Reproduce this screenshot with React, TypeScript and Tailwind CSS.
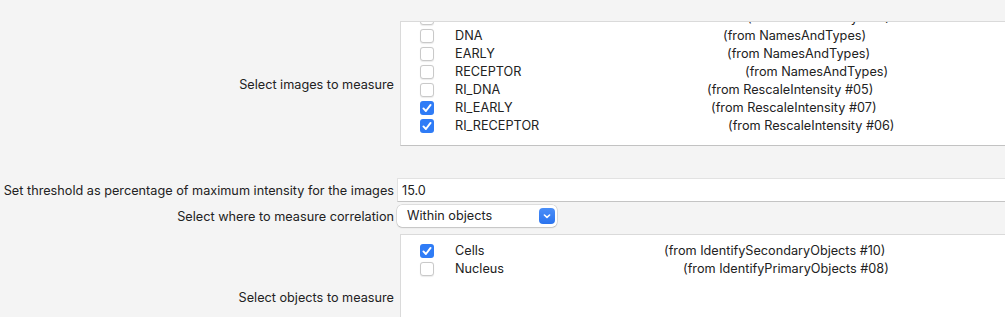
import React from 'react';

type Item = { name: string; from: string; checked: boolean; nameW: string };

const images: Item[] = [
  { name: 'ORIG', from: '(from ColorToGray #02)', checked: false, nameW: 'w-[292px]' },
  { name: 'DNA', from: '(from NamesAndTypes)', checked: false, nameW: 'w-[268px]' },
  { name: 'EARLY', from: '(from NamesAndTypes)', checked: false, nameW: 'w-[272px]' },
  { name: 'RECEPTOR', from: '(from NamesAndTypes)', checked: false, nameW: 'w-[290px]' },
  { name: 'RI_DNA', from: '(from RescaleIntensity #05)', checked: false, nameW: 'w-[252px]' },
  { name: 'RI_EARLY', from: '(from RescaleIntensity #07)', checked: true, nameW: 'w-[256px]' },
  { name: 'RI_RECEPTOR', from: '(from RescaleIntensity #06)', checked: true, nameW: 'w-[273px]' },
];

const objects: Item[] = [
  { name: 'Cells', from: '(from IdentifySecondaryObjects #10)', checked: true, nameW: 'w-[209px]' },
  { name: 'Nucleus', from: '(from IdentifyPrimaryObjects #08)', checked: false, nameW: 'w-[228px]' },
];

function Check({ on }: { on: boolean }) {
  if (on) {
    return (
      <span className="w-[14px] h-[14px] shrink-0 rounded-[3px] bg-[#2f7cf6] flex items-center justify-center">
        <svg viewBox="0 0 14 14" className="w-[14px] h-[14px]">
          <path d="M3.4 7.4 L5.9 10 L10.6 3.9" fill="none" stroke="#fff" strokeWidth="1.9" strokeLinecap="round" strokeLinejoin="round" />
        </svg>
      </span>
    );
  }
  return <span className="w-[14px] h-[14px] shrink-0 rounded-[3px] bg-white border border-[#c9c9c9] shadow-[0_0.5px_1px_rgba(0,0,0,0.08)]" />;
}

function Row({ item }: { item: Item }) {
  return (
    <div className="flex items-center h-[18px] pl-[19px] whitespace-nowrap">
      <Check on={item.checked} />
      <span className={`ml-[21px] pt-[1px] shrink-0 ${item.nameW}`}>{item.name}</span>
      <span className="pt-[1px]">{item.from}</span>
    </div>
  );
}

export default function App() {
  return (
    <div
      className="w-[1005px] h-[317px] overflow-hidden bg-[#f4f4f4] text-[12.7px] text-[#222] leading-none"
      style={{ fontFamily: 'Inter, "Liberation Sans", Arial, sans-serif' }}
    >
      <div className="pt-[21px] flex flex-col">
        {/* images */}
        <div className="flex items-center">
          <div className="w-[397px] shrink-0 text-right pr-[3px] pt-[3px]">Select images to measure</div>
          <div className="pl-[3px] shrink-0">
            <div className="w-[640px] h-[125px] bg-white border border-[#dadada] border-b-[#c2c2c2] overflow-hidden">
              <div className="-mt-[13px]">
                {images.map((it) => (
                  <Row key={it.name} item={it} />
                ))}
              </div>
            </div>
          </div>
        </div>

        {/* threshold */}
        <div className="flex items-center mt-[32px]">
          <div className="w-[397px] shrink-0 text-right pr-[3px] pt-[2px] whitespace-nowrap">
            Set threshold as percentage of maximum intensity for the images
          </div>
          <div className="w-[640px] shrink-0 h-[24px] bg-white border border-[#e2e2e2] border-b-[#c4c4c4] flex items-center pl-[4px] pt-[2px]">
            15.0
          </div>
        </div>

        {/* correlation */}
        <div className="flex items-center mt-[3px]">
          <div className="w-[397px] shrink-0 text-right pr-[3px] pt-[2px]">Select where to measure correlation</div>
          <div className="w-[160px] shrink-0 h-[22px] bg-white rounded-[5px] shadow-[0_0_0_0.5px_rgba(0,0,0,0.18),0_1px_1.5px_rgba(0,0,0,0.12)] flex items-center justify-between pl-[10px] pr-[2px]">
            <span className="pt-[1px]">Within objects</span>
            <span className="w-[16px] h-[16px] rounded-[4px] bg-gradient-to-b from-[#4a8ef8] to-[#2a73ee] flex items-center justify-center">
              <svg viewBox="0 0 16 16" className="w-[16px] h-[16px]">
                <path d="M5.4 7 L8 9.4 L10.6 7" fill="none" stroke="#fff" strokeWidth="1.6" strokeLinecap="round" strokeLinejoin="round" />
              </svg>
            </span>
          </div>
        </div>

        {/* objects */}
        <div className="flex items-center mt-[7px]">
          <div className="w-[397px] shrink-0 text-right pr-[3px] pt-[3px]">Select objects to measure</div>
          <div className="pl-[3px] shrink-0">
            <div className="w-[640px] h-[125px] bg-white border border-[#dadada] border-b-[#c2c2c2] pt-[7px]">
              {objects.map((it) => (
                <Row key={it.name} item={it} />
              ))}
            </div>
          </div>
        </div>
      </div>
    </div>
  );
}
